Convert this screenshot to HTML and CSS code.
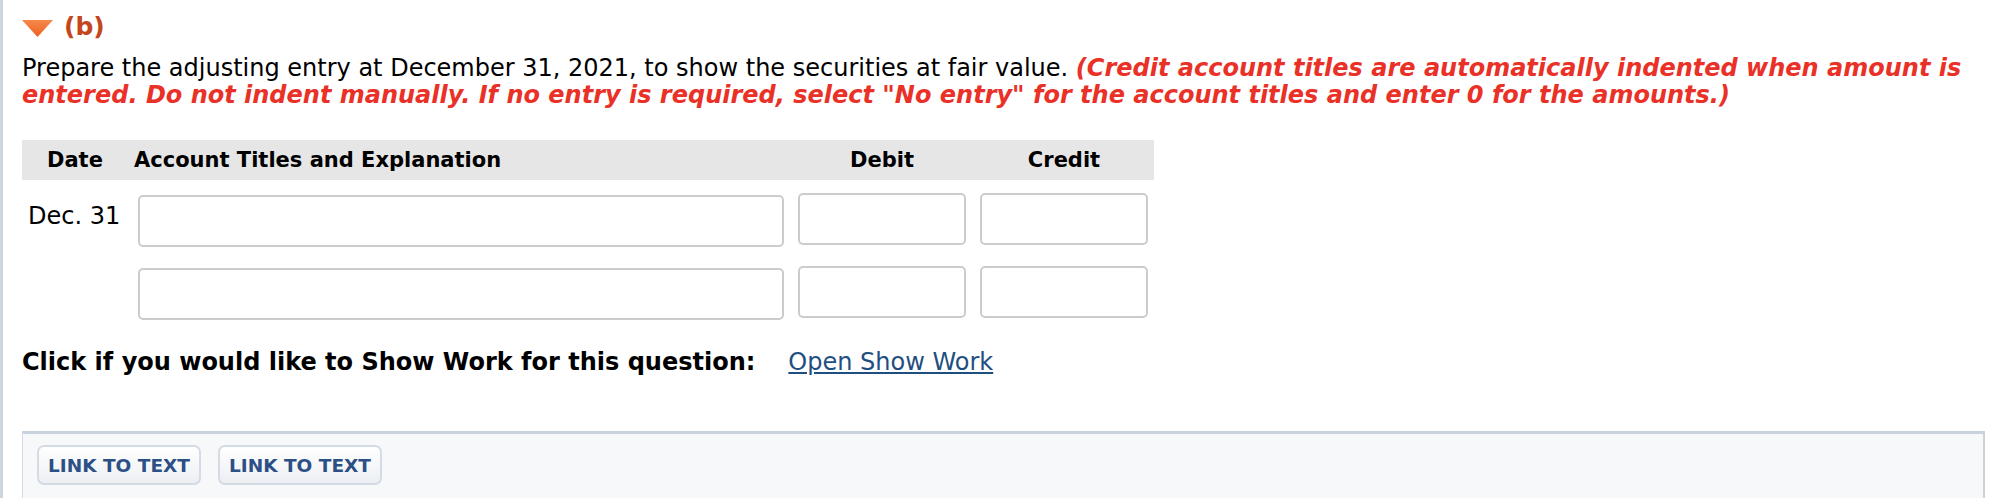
FILE: index.html
```html
<!DOCTYPE html>
<html>
<head>
<meta charset="utf-8">
<link rel="stylesheet" href="styles.css">
</head>
<body>
<div class="page">
  <div class="part-head">
    <svg class="tri" width="31" height="17" viewBox="0 0 31 17">
      <defs>
        <linearGradient id="tg" x1="0" y1="0" x2="0" y2="1">
          <stop offset="0" stop-color="#f58a4c"/>
          <stop offset="1" stop-color="#ef5f1e"/>
        </linearGradient>
      </defs>
      <polygon points="0,0 31,0 15.5,17" fill="url(#tg)"/>
    </svg>
    <span class="part-label">(b)</span>
  </div>
  <p class="prompt">Prepare the adjusting entry at December 31, 2021, to show the securities at fair value. <em class="note">(Credit account titles are automatically indented when amount is entered. Do not indent manually. If no entry is required, select "No entry" for the account titles and enter 0 for the amounts.)</em></p>

  <div class="journal">
    <div class="jrow jhead">
      <div class="jh-date">Date</div>
      <div class="jh-acct">Account Titles and Explanation</div>
      <div class="jh-num">Debit</div>
      <div class="jh-num">Credit</div>
    </div>
    <div class="jrow jentry">
      <div class="jd">Dec. 31</div>
      <input class="inp inp-acct" type="text">
      <input class="inp" type="text">
      <input class="inp" type="text">
    </div>
    <div class="jrow jentry">
      <div class="jd"></div>
      <input class="inp inp-acct" type="text">
      <input class="inp" type="text">
      <input class="inp" type="text">
    </div>
  </div>

  <div class="showwork">
    <span class="sw-label">Click if you would like to Show Work for this question:</span>
    <a class="sw-link" href="#">Open Show Work</a>
  </div>

  <div class="links">
    <button class="link-btn">LINK TO TEXT</button>
    <button class="link-btn">LINK TO TEXT</button>
  </div>
</div>
</body>
</html>
```

FILE: styles.css
```css
html, body {
  margin: 0;
  padding: 0;
  background: #ffffff;
}
body {
  font-family: "DejaVu Sans", Verdana, sans-serif;
  color: #000;
  height: 498px;
  overflow: hidden;
}
.page {
  border-left: 3px solid #cdd5df;
  padding-left: 19px;
  height: 498px;
  box-sizing: border-box;
}
.part-head {
  display: flex;
  align-items: center;
  gap: 11px;
  padding-top: 12px;
  height: 30px;
}
.tri {
  display: block;
  margin-top: 2px;
}
.part-label {
  color: #c4461c;
  font-weight: bold;
  font-size: 25px;
  line-height: 30px;
}
.prompt {
  margin: 13px 0 0 0;
  font-size: 24px;
  line-height: 27px;
  padding-right: 18px;
}
.note {
  color: #ea3127;
  font-weight: bold;
  font-style: italic;
}
.journal {
  margin-top: 31px;
  width: 1132px;
}
.jrow {
  display: grid;
  grid-template-columns: 102px 646px 168px 168px;
  column-gap: 14px;
}
.jhead {
  background: #e6e6e6;
  height: 40px;
  line-height: 40px;
  font-weight: bold;
  font-size: 21px;
}
.jh-date {
  padding-left: 25px;
}
.jh-acct {
  margin-left: -4px;
}
.jh-num {
  text-align: center;
}
.jentry {
  padding-top: 13px;
  align-items: start;
}
.jentry + .jentry {
  padding-top: 19px;
}
.jd {
  font-size: 24px;
  line-height: 28px;
  padding-left: 6px;
  padding-top: 9px;
}
.inp {
  display: block;
  box-sizing: border-box;
  width: 168px;
  height: 52px;
  border: 2px solid #cccccc;
  border-radius: 5px;
  background: #fff;
  margin: 0;
  padding: 0 8px;
  font-family: inherit;
  font-size: 18px;
}
.inp-acct {
  width: 646px;
  margin-top: 2px;
}
.showwork {
  margin-top: 28px;
  display: flex;
  align-items: baseline;
  gap: 33px;
  font-size: 24px;
  line-height: 28px;
}
.sw-label {
  font-weight: bold;
}
.sw-link {
  color: #1f4f80;
  text-decoration: underline;
}
.links {
  margin-top: 55px;
  width: 1963px;
  box-sizing: border-box;
  height: 120px;
  border-top: 3px solid #c9d3de;
  border-left: 1px solid #d3dbe4;
  border-right: 2px solid #c9d3de;
  background: #f7f8fa;
  padding: 11px 0 0 14px;
  display: flex;
  gap: 17px;
  align-items: flex-start;
}
.link-btn {
  width: 164px;
  height: 40px;
  padding: 0;
  border: 2px solid #d3dbe4;
  border-radius: 7px;
  background: linear-gradient(#ffffff, #eceff3);
  color: #2c4f86;
  font-family: "DejaVu Sans", Verdana, sans-serif;
  font-weight: bold;
  font-size: 18.5px;
  cursor: pointer;
}
```
